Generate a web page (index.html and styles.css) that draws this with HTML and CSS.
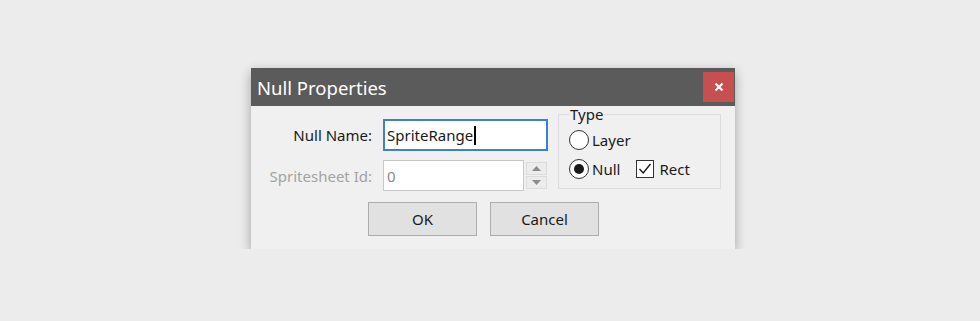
FILE: index.html
```html
<!DOCTYPE html>
<html lang="en">
<head>
    <meta charset="UTF-8">
    <title>Null Properties</title>
    <link rel="stylesheet" href="styles.css">
</head>
<body>
    <div class="dialog">
        <div class="title-bar">
            <span class="title">Null Properties</span>
            <div class="close-btn">
                <svg width="10" height="10" viewBox="0 0 10 10">
                    <path d="M1.5 1.5 L8.5 8.5 M8.5 1.5 L1.5 8.5" stroke="#fff" stroke-width="2.2"/>
                </svg>
            </div>
        </div>

        <div class="dialog-body">
            <div class="top-section">
                <div class="form-grid">
                    <label class="field-label">Null Name:</label>
                    <div class="text-field active">SpriteRange<span class="caret"></span></div>

                    <label class="field-label disabled">Spritesheet Id:</label>
                    <div class="spin-wrap">
                        <div class="text-field disabled">0</div>
                        <div class="spinner">
                            <div class="spin-btn">
                                <svg width="9" height="5" viewBox="0 0 9 5"><path d="M0 5 L4.5 0 L9 5 Z" fill="#8c8c8c"/></svg>
                            </div>
                            <div class="spin-btn">
                                <svg width="9" height="5" viewBox="0 0 9 5"><path d="M0 0 L4.5 5 L9 0 Z" fill="#8c8c8c"/></svg>
                            </div>
                        </div>
                    </div>
                </div>

                <!-- Type group box -->
                <fieldset class="type-group">
                    <legend>Type</legend>
                    <div class="option-row">
                        <span class="radio"></span>
                        <span>Layer</span>
                    </div>
                    <div class="option-row">
                        <span class="radio checked"></span>
                        <span>Null</span>
                        <span class="checkbox">
                            <svg width="16" height="16" viewBox="0 0 16 16">
                                <path d="M2.5 8 L6.2 12 L13.5 3" fill="none" stroke="#1a1a1a" stroke-width="1.4"/>
                            </svg>
                        </span>
                        <span>Rect</span>
                    </div>
                </fieldset>
            </div>

            <div class="button-row">
                <button class="btn">OK</button>
                <button class="btn">Cancel</button>
            </div>
        </div>
    </div>
</body>
</html>
```

FILE: styles.css
```css
body {
    margin: 0;
    padding: 68px 0 0 251px;
    background-color: #ececec;
    font-family: 'Noto Sans', 'Open Sans', sans-serif;
    font-size: 15px;
    color: #1a1a1a;
}
.dialog {
    width: 484px;
    background-color: #f0f0f0;
    box-shadow: 0px 4px 11px rgba(0, 0, 0, 0.32);
}
.title-bar {
    height: 38px;
    background-color: #5b5b5b;
    display: flex;
    align-items: center;
    justify-content: space-between;
    padding-left: 6px;
    padding-right: 1px;
}
.title {
    color: #ffffff;
    font-size: 18.5px;
}
.close-btn {
    width: 31px;
    height: 30px;
    background-color: #c74f4f;
    display: flex;
    align-items: center;
    justify-content: center;
}
.top-section {
    display: flex;
    align-items: flex-start;
}
/* Left side: labels and fields */
.form-grid {
    display: grid;
    grid-template-columns: 121px auto;
    column-gap: 11px;
    row-gap: 9px;
    margin-top: 13px;
    align-items: center;
}
.field-label {
    text-align: right;
    white-space: nowrap;
}
.field-label.disabled {
    color: #a3a3a3;
}
.text-field {
    box-sizing: border-box;
    height: 32px;
    width: 165px;
    background-color: #ffffff;
    border: 1px solid #c8c8c8;
    padding-left: 3px;
    display: flex;
    align-items: center;
}
.text-field.active {
    border: 2px solid #3d7fd3;
    padding-left: 2px;
}
.text-field.disabled {
    width: 141px;
    height: 31px;
    color: #8a8a8a;
}
.caret {
    display: inline-block;
    width: 2px;
    height: 19px;
    background-color: #000;
    margin-left: 1px;
}
.spin-wrap {
    display: flex;
    align-items: center;
    gap: 2px;
}
.spinner {
    display: flex;
    flex-direction: column;
    gap: 1px;
}
.spin-btn {
    box-sizing: border-box;
    width: 21px;
    height: 13px;
    background-color: #ececec;
    border: 1px solid #dcdcdc;
    display: flex;
    align-items: center;
    justify-content: center;
}
/* Right side: Type group box */
.type-group {
    box-sizing: border-box;
    width: 163px;
    height: 83px;
    margin: 0 0 0 10px;
    padding: 8px 0 0 10px;
    border: 1px solid #dcdcdc;
    min-width: 0;
}
.type-group legend {
    padding: 0 1px;
    margin-left: 0;
    line-height: 16px;
}
.option-row {
    display: flex;
    align-items: center;
    height: 20px;
    margin-bottom: 9px;
}
.radio {
    box-sizing: border-box;
    width: 20px;
    height: 20px;
    border: 1.5px solid #333;
    border-radius: 50%;
    background-color: #fff;
    margin-right: 3px;
    display: flex;
    align-items: center;
    justify-content: center;
}
.radio.checked::after {
    content: "";
    width: 10px;
    height: 10px;
    border-radius: 50%;
    background-color: #1a1a1a;
}
.checkbox {
    box-sizing: border-box;
    width: 18px;
    height: 18px;
    border: 1.5px solid #333;
    background-color: #fff;
    margin-left: 16px;
    margin-right: 5px;
    display: flex;
    align-items: center;
    justify-content: center;
}
.button-row {
    display: flex;
    gap: 13px;
    padding: 11px 0 13px 117px;
}
.btn {
    width: 109px;
    height: 34px;
    background-color: #e1e1e1;
    border: 1px solid #adadad;
    font-family: inherit;
    font-size: 15px;
    color: #1a1a1a;
}
```
